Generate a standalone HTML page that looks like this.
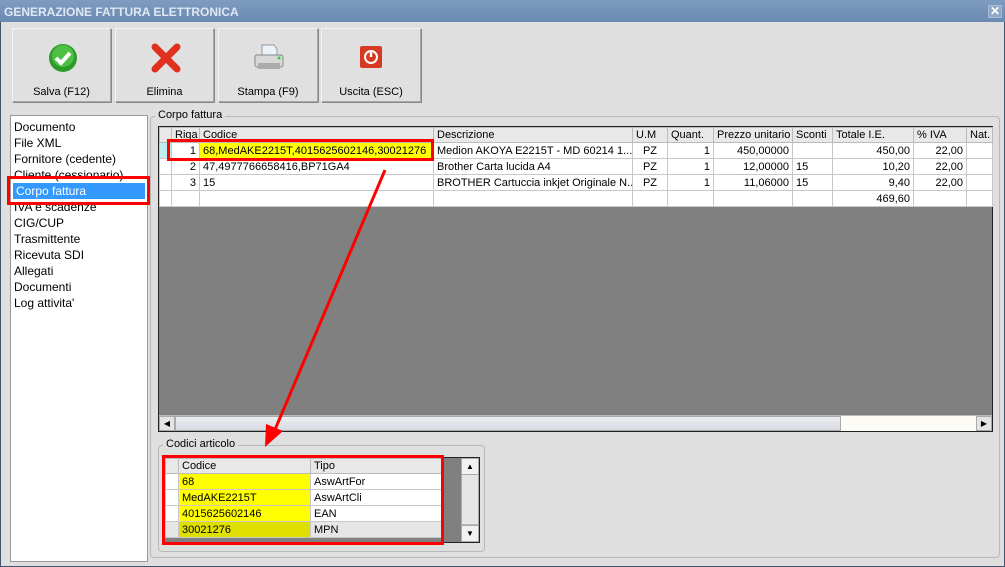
<!DOCTYPE html>
<html><head><meta charset="utf-8"><style>
*{box-sizing:border-box;margin:0;padding:0}
body{width:1005px;height:567px;overflow:hidden;background:#5a6b7d;font-family:"Liberation Sans",sans-serif;font-size:11px;color:#000;position:relative}
.abs{position:absolute}
.win{left:0;top:0;width:1005px;height:567px;background:#dfdfdf;border:1px solid #44546a}
.title{left:0;top:0;width:1005px;height:22px;background:linear-gradient(#7f9cc0,#6a8ab2);color:#dfe8f3;font-weight:bold;font-size:12px;padding:5px 4px}
.btn{top:28px;height:74px;background:#e0e0e0;border:1px solid #a8a8a8;border-top-color:#f4f4f4;border-left-color:#f4f4f4;box-shadow:1px 1px 0 #888;text-align:center}
.btn span{position:absolute;left:0;right:0;top:57px;font-size:11px}
.list{left:10px;top:115px;width:138px;height:447px;background:#fff;border:1px solid #999}
.list div{height:16px;line-height:16px;padding-left:3px;font-size:12px}
.grp{border:1px solid #b8b8b8;border-radius:4px}
.lbl{background:#dfdfdf;padding:0 3px;font-size:11px}
table{border-collapse:collapse;table-layout:fixed}
td{border:1px solid #c8c8c8;height:16px;line-height:14px;padding:0 3px;white-space:nowrap;overflow:hidden;font-size:11px}
.hd td{background:#e8e8e8;border-color:#bbb;height:15px}
.r{text-align:right}.c{text-align:center}
.y{background:#ffff00}
.red{border:3px solid #f00}
</style></head><body>
<div class="abs win"></div>
<div class="abs title">GENERAZIONE FATTURA ELETTRONICA</div>
<div class="abs" style="left:988px;top:5px;width:14px;height:13px;background:#8ea8c8;border:1px solid #a9bdd6;color:#fff;font-weight:bold;font-size:12px;line-height:11px;text-align:center">✕</div>

<div class="abs btn" style="left:12px;width:99px"><svg class="abs" style="left:35px;top:14px" width="30" height="30"><circle cx="15" cy="15" r="14" fill="#2e9a2a"/><circle cx="15" cy="13" r="11" fill="#4cc043"/><path d="M8 15l5 5 9-10" stroke="#fff" stroke-width="4" fill="none"/></svg><span>Salva (F12)</span></div>
<div class="abs btn" style="left:115px;width:99px"><svg class="abs" style="left:35px;top:14px" width="30" height="30"><path d="M4 4L26 26M26 4L4 26" stroke="#e0301e" stroke-width="7" stroke-linecap="round"/></svg><span>Elimina</span></div>
<div class="abs btn" style="left:218px;width:100px"><svg class="abs" style="left:34px;top:14px" width="32" height="30"><path d="M9 2h12l3 4v8H9z" fill="#eaf3fb" stroke="#999"/><rect x="2" y="12" width="28" height="12" rx="2" fill="#d8d8d8" stroke="#888"/><rect x="5" y="20" width="22" height="6" fill="#aaa"/><circle cx="26" cy="15" r="1.5" fill="#3c3"/></svg><span>Stampa (F9)</span></div>
<div class="abs btn" style="left:321px;width:100px"><svg class="abs" style="left:38px;top:17px" width="24" height="24"><rect x="0" y="0" width="22" height="22" rx="2" fill="#d63a22"/><circle cx="11" cy="11" r="6" stroke="#fff" stroke-width="2" fill="none"/><path d="M11 5v6" stroke="#fff" stroke-width="2.5"/></svg><span>Uscita (ESC)</span></div>

<div class="abs list"><div style="margin-top:3px">Documento</div><div>File XML</div><div>Fornitore (cedente)</div><div>Cliente (cessionario)</div><div style="background:#3399ff;color:#fff;margin:0 2px">Corpo fattura</div><div>IVA e scadenze</div><div>CIG/CUP</div><div>Trasmittente</div><div>Ricevuta SDI</div><div>Allegati</div><div>Documenti</div><div>Log attivita'</div></div>
<div class="abs red" style="left:7px;top:176px;width:143px;height:29px"></div>

<div class="abs grp" style="left:150px;top:116px;width:850px;height:442px"></div>
<div class="abs lbl" style="left:155px;top:109px">Corpo fattura</div>
<div class="abs" style="left:158px;top:126px;width:835px;height:306px;background:#808080;border:1px solid #222">
<table style="background:#fff;width:833px">
<colgroup><col width="12"><col width="28"><col width="234"><col width="199"><col width="35"><col width="46"><col width="79"><col width="40"><col width="81"><col width="53"><col width="26"></colgroup>
<tr class="hd"><td></td><td>Riga</td><td>Codice</td><td>Descrizione</td><td>U.M</td><td>Quant.</td><td>Prezzo unitario</td><td>Sconti</td><td>Totale I.E.</td><td>% IVA</td><td>Nat.</td></tr>
<tr><td style="background:#bfeef0"></td><td class="r">1</td><td class="y">68,MedAKE2215T,4015625602146,30021276</td><td>Medion AKOYA E2215T - MD 60214 1....</td><td class="c">PZ</td><td class="r">1</td><td class="r">450,00000</td><td></td><td class="r">450,00</td><td class="r">22,00</td><td></td></tr>
<tr><td></td><td class="r">2</td><td>47,4977766658416,BP71GA4</td><td>Brother Carta lucida A4</td><td class="c">PZ</td><td class="r">1</td><td class="r">12,00000</td><td>15</td><td class="r">10,20</td><td class="r">22,00</td><td></td></tr>
<tr><td></td><td class="r">3</td><td>15</td><td>BROTHER Cartuccia inkjet Originale N...</td><td class="c">PZ</td><td class="r">1</td><td class="r">11,06000</td><td>15</td><td class="r">9,40</td><td class="r">22,00</td><td></td></tr>
<tr><td></td><td></td><td></td><td></td><td></td><td></td><td></td><td></td><td class="r">469,60</td><td></td><td></td></tr>
</table>
<div class="abs" style="left:0;top:288px;width:833px;height:16px;background:#fcfbf6;border-top:1px solid #bbb">
<div class="abs" style="left:0;top:0;width:16px;height:15px;background:#e4e4e4;border:1px solid #aaa;font-size:8px;text-align:center;line-height:13px">◀</div>
<div class="abs" style="left:16px;top:0;width:666px;height:15px;background:linear-gradient(#eceef2,#d8dbe2);border:1px solid #aaa"></div>
<div class="abs" style="right:0;top:0;width:16px;height:15px;background:#e4e4e4;border:1px solid #aaa;font-size:8px;text-align:center;line-height:13px">▶</div>
</div>
</div>
<div class="abs red" style="left:167px;top:139px;width:267px;height:22px"></div>

<div class="abs grp" style="left:158px;top:445px;width:327px;height:107px"></div>
<div class="abs lbl" style="left:163px;top:438px">Codici articolo</div>
<div class="abs" style="left:164px;top:457px;width:316px;height:86px;background:#808080;border:1px solid #222">
<table style="background:#fff;width:276px">
<colgroup><col width="13"><col width="132"><col width="131"></colgroup>
<tr class="hd"><td></td><td>Codice</td><td>Tipo</td></tr>
<tr><td></td><td class="y">68</td><td>AswArtFor</td></tr>
<tr><td></td><td class="y">MedAKE2215T</td><td>AswArtCli</td></tr>
<tr><td></td><td class="y">4015625602146</td><td>EAN</td></tr>
<tr style="background:#e6e6e6"><td></td><td style="background:#e0e000">30021276</td><td>MPN</td></tr>
</table>
<div class="abs" style="left:296px;top:0;width:18px;height:84px;background:#f2f2f2;border:1px solid #aaa">
<div style="height:16px;border-bottom:1px solid #aaa;font-size:8px;text-align:center;line-height:15px">▲</div>
<div style="height:50px;background:#e6e6e6;border-bottom:1px solid #bbb"></div>
<div style="position:absolute;bottom:0;width:16px;height:16px;border-top:1px solid #aaa;font-size:8px;text-align:center;line-height:15px">▼</div>
</div>
</div>
<div class="abs red" style="left:162px;top:455px;width:282px;height:90px"></div>

<svg class="abs" style="left:0;top:0" width="1005" height="567"><path d="M385 170L274 432" stroke="#f00" stroke-width="3"/><path d="M265 447L266 424L283 431z" fill="#f00"/></svg>
</body></html>
